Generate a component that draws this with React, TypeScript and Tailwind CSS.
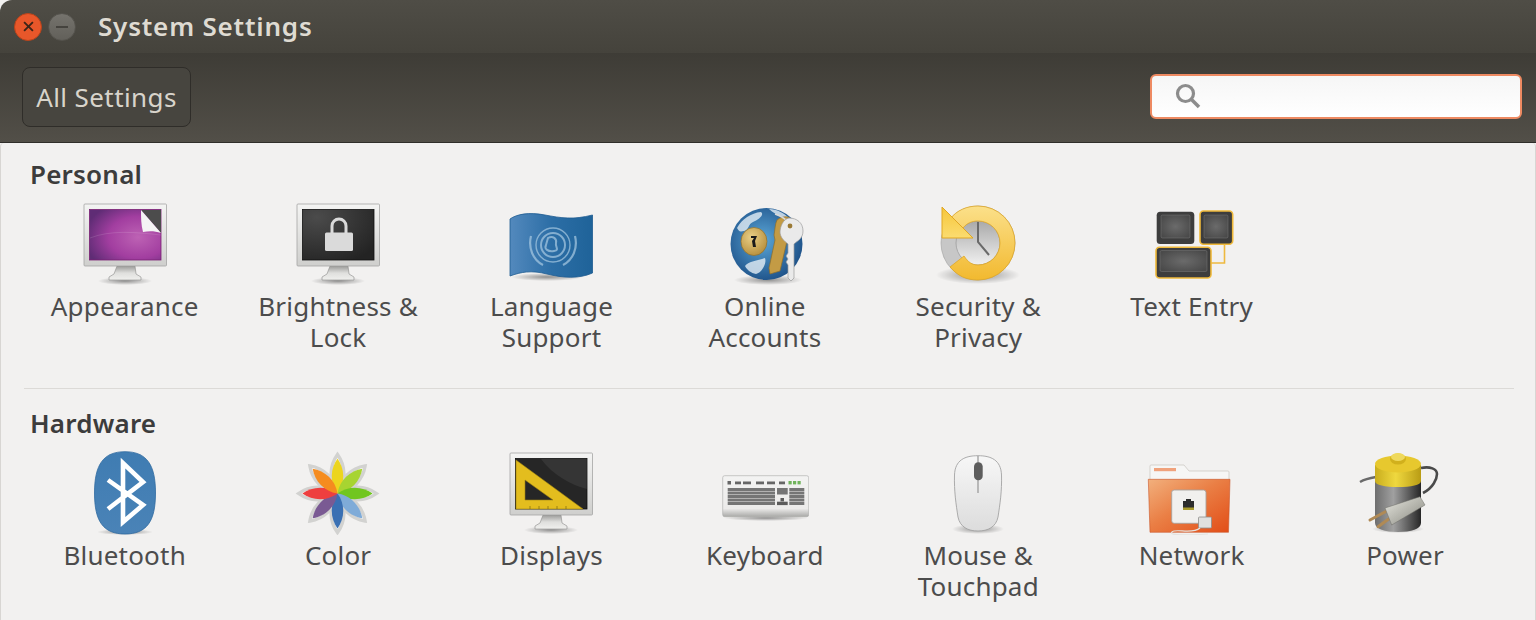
import React from 'react';

function Defs() {
    return (
        <svg width="0" height="0" className="block h-0 w-0">
            <defs>
                <linearGradient id="bezel" x1="0" y1="0" x2="0" y2="1">
                    <stop offset="0" stopColor="#f4f4f3" />
                    <stop offset="1" stopColor="#cfcfcd" />
                </linearGradient>
                <linearGradient id="neck" x1="0" y1="0" x2="0" y2="1">
                    <stop offset="0" stopColor="#9b9b99" />
                    <stop offset="0.5" stopColor="#dfdfdd" />
                    <stop offset="1" stopColor="#f0f0ee" />
                </linearGradient>
                <radialGradient id="purple" cx="0.68" cy="0.55" r="0.75">
                    <stop offset="0" stopColor="#bd62b4" />
                    <stop offset="0.55" stopColor="#a23ea0" />
                    <stop offset="1" stopColor="#5f2c75" />
                </radialGradient>
                <radialGradient id="darkscreen" cx="0.2" cy="0.15" r="1">
                    <stop offset="0" stopColor="#4b4b4b" />
                    <stop offset="1" stopColor="#232323" />
                </radialGradient>
                <linearGradient id="flag" x1="0" y1="0" x2="1" y2="0">
                    <stop offset="0" stopColor="#5389bd" />
                    <stop offset="0.5" stopColor="#2c6ea6" />
                    <stop offset="1" stopColor="#1f6399" />
                </linearGradient>
                <radialGradient id="globe" cx="0.45" cy="0.45" r="0.6">
                    <stop offset="0" stopColor="#5ba7d8" />
                    <stop offset="1" stopColor="#1c4f86" />
                </radialGradient>
                <radialGradient id="coin" cx="0.4" cy="0.35" r="0.7">
                    <stop offset="0" stopColor="#e9cf86" />
                    <stop offset="1" stopColor="#b58e3c" />
                </radialGradient>
                <linearGradient id="gold" x1="0" y1="0" x2="0" y2="1">
                    <stop offset="0" stopColor="#fbe08a" />
                    <stop offset="1" stopColor="#f2b92f" />
                </linearGradient>
                <linearGradient id="arrow" x1="0" y1="0" x2="0" y2="1">
                    <stop offset="0" stopColor="#f6c63a" />
                    <stop offset="1" stopColor="#fbdc70" />
                </linearGradient>
                <linearGradient id="clock" x1="0" y1="0" x2="0" y2="1">
                    <stop offset="0" stopColor="#a9a9a9" />
                    <stop offset="1" stopColor="#f0f0f0" />
                </linearGradient>
                <radialGradient id="keycap" cx="0.5" cy="0.5" r="0.6">
                    <stop offset="0" stopColor="#6b6b6b" />
                    <stop offset="1" stopColor="#4a4a4a" />
                </radialGradient>
                <linearGradient id="bt" x1="0" y1="0" x2="0" y2="1">
                    <stop offset="0" stopColor="#3f7cb2" />
                    <stop offset="1" stopColor="#4a83b7" />
                </linearGradient>
                <linearGradient id="kb" x1="0" y1="0" x2="0" y2="1">
                    <stop offset="0" stopColor="#f3f3f2" />
                    <stop offset="0.8" stopColor="#ecebea" />
                    <stop offset="1" stopColor="#a9a9a7" />
                </linearGradient>
                <linearGradient id="mouse" x1="0" y1="0" x2="0" y2="1">
                    <stop offset="0" stopColor="#f7f7f7" />
                    <stop offset="1" stopColor="#dcdcdc" />
                </linearGradient>
                <linearGradient id="folder" x1="0" y1="0" x2="1" y2="1">
                    <stop offset="0" stopColor="#f2b07d" />
                    <stop offset="0.45" stopColor="#ea7f45" />
                    <stop offset="1" stopColor="#e24d17" />
                </linearGradient>
                <linearGradient id="battery" x1="0" y1="0" x2="1" y2="0">
                    <stop offset="0" stopColor="#6e6e6e" />
                    <stop offset="0.4" stopColor="#a0a0a0" />
                    <stop offset="1" stopColor="#262626" />
                </linearGradient>
                <linearGradient id="batterytop" x1="0" y1="0" x2="1" y2="0">
                    <stop offset="0" stopColor="#c9ad1d" />
                    <stop offset="0.45" stopColor="#efd83f" />
                    <stop offset="1" stopColor="#b99c14" />
                </linearGradient>
                <linearGradient id="plug" x1="0" y1="0" x2="1" y2="1">
                    <stop offset="0" stopColor="#e8e8e0" />
                    <stop offset="1" stopColor="#85857d" />
                </linearGradient>
                <radialGradient id="shade" cx="0.5" cy="0.5" r="0.5">
                    <stop offset="0" stopColor="#000" stopOpacity="0.4" />
                    <stop offset="1" stopColor="#000" stopOpacity="0" />
                </radialGradient>
            </defs>
        </svg>
    );
}

function IconBox({ children }: { children: React.ReactNode }) {
    return (
        <svg viewBox="0 0 100 86" className="h-[86px] w-[100px] shrink-0 blur-[0.6px]">
            {children}
        </svg>
    );
}

// the monitor shared by Appearance, Brightness and Displays
function Monitor({ children }: { children: React.ReactNode }) {
    return (
        <>
            <ellipse cx="50" cy="81" rx="27" ry="4" fill="url(#shade)" />
            <path d="M42 66h18l1 8 5 3v3H34v-3l5-3z" fill="url(#neck)" stroke="#8c8c8a" strokeWidth="0.6" />
            <rect x="9" y="4" width="82.5" height="62" rx="1" fill="url(#bezel)" stroke="#a5a5a3" strokeWidth="0.8" />
            {children}
        </>
    );
}

function Appearance() {
    return (
        <IconBox>
            <Monitor>
                <rect x="14.5" y="9.5" width="71.5" height="50.5" fill="url(#purple)" stroke="#7a1f74" strokeWidth="0.8" />
                <path d="M66 10h20v23z" fill="#4c4c4c" />
                <path d="M66 10l20 23c-6-2-12-2-18-1-2-7-2-15-2-22z" fill="#f4f4f4" />
                <path d="M15 38c20-8 45-6 71-3" stroke="#fff" strokeOpacity="0.12" strokeWidth="1" fill="none" />
            </Monitor>
        </IconBox>
    );
}

function Brightness() {
    return (
        <IconBox>
            <Monitor>
                <rect x="14.5" y="9.5" width="71.5" height="50.5" fill="url(#darkscreen)" stroke="#111" strokeWidth="0.8" />
                <path d="M44 33v-7a7 7 0 0 1 14 0v7" fill="none" stroke="#dadada" strokeWidth="3" />
                <rect x="37" y="32.5" width="28" height="18.5" rx="1.5" fill="#dadada" />
            </Monitor>
        </IconBox>
    );
}

function Language() {
    return (
        <IconBox>
            <ellipse cx="46" cy="77" rx="36" ry="4" fill="url(#shade)" />
            <path
                d="M9 19C16 14 28 12 44 15S72 20 91.5 15V73C78 79 62 78 46 74S20 72 9 76Z"
                fill="url(#flag)"
                stroke="#1d5a90"
                strokeWidth="0.8"
            />
            <g fill="none" stroke="#a9cbe3" strokeOpacity="0.7">
                <circle cx="52" cy="45" r="12" strokeWidth="2" />
                <circle cx="52" cy="45" r="17" strokeWidth="1.4" />
                <path d="M30 36c-3 12 2 24 12 29M74 36c3 12-2 24-12 29" strokeWidth="2.2" />
                <path d="M47 38c5-3 9 1 8 5s4 7-2 8-10-2-8-6z" strokeWidth="2" />
            </g>
        </IconBox>
    );
}

function OnlineAccounts() {
    return (
        <IconBox>
            <ellipse cx="53" cy="80" rx="34" ry="5" fill="url(#shade)" />
            <circle cx="51.5" cy="44" r="36" fill="url(#globe)" />
            <path d="M22 28c5-9 14-15 24-16 4 3-3 8-8 10s-4 8-9 9-5 0-7-3zM30 66c4-5 12-5 20-8 2 5-3 15-9 16-5-1-9-4-11-8zM54 9c8 0 15 4 20 9-6 0-12-2-20-9z" fill="#e3eef5" fillOpacity="0.8" />
            <ellipse cx="39" cy="41.5" rx="13" ry="14" fill="url(#coin)" stroke="#8f6f2a" strokeWidth="0.7" />
            <path d="M36 36h6l-2 5 1 6h-3l-1-6 2-3h-3z" fill="#1a1a1a" />
            <path d="M62 20c6-5 15-4 15 2s-7 9-9 13l4 6-7 30-10 3-1-6 6-28-1-5c1-5 1-11 3-15z" fill="#c39b45" stroke="#8f6f2a" strokeWidth="0.7" />
            <path d="M60 14c6 2 10 4 14 9" fill="none" stroke="#d9d9d9" strokeWidth="1.4" />
            <path d="M74 18c8 0 14 5 14 13s-6 10-9 13v34l-3 3-3-3V65l-2-3 2-3-2-3 2-3v-9c-4-3-8-7-8-12s3-13 9-14z" fill="#eaeaea" stroke="#9b9b9b" strokeWidth="0.7" />
            <circle cx="75" cy="26" r="2.4" fill="#9a7a35" />
        </IconBox>
    );
}

function SecurityPrivacy() {
    return (
        <IconBox>
            <ellipse cx="50" cy="75" rx="42" ry="9" fill="url(#shade)" />
            <circle cx="50" cy="43" r="37" fill="#c7c7c7" stroke="#9f9f9f" strokeWidth="0.6" />
            <circle cx="50" cy="43" r="22" fill="url(#clock)" stroke="#8f8f8f" strokeWidth="0.6" />
            <path d="M50 22v20l11 13" fill="none" stroke="#6a6a6a" strokeWidth="2" />
            <path
                d="M22 19C29 10 39 6 50 6a37 37 0 0 1 0 74c-12 0-20-4-28-13l14-11c4 6 8 9 14 9a22 22 0 0 0 0-44c-6 0-11 2-15 7z"
                fill="url(#gold)"
                stroke="#e0a725"
                strokeWidth="0.8"
            />
            <path d="M14 7v31h31z" fill="url(#arrow)" stroke="#e0a725" strokeWidth="1" />
        </IconBox>
    );
}

function TextEntry() {
    return (
        <IconBox>
            <path d="M82.5 44v19H69" fill="none" stroke="#eeb93f" strokeWidth="1.6" />
            <rect x="14.7" y="11.7" width="37.6" height="32.3" rx="3.5" fill="#3d3d3d" />
            <rect x="19" y="15" width="29" height="23" rx="1.5" fill="url(#keycap)" stroke="#7a7a7a" strokeWidth="0.5" />
            <rect x="58" y="11" width="32.7" height="33.3" rx="3.5" fill="#3d3d3d" stroke="#efb93a" strokeWidth="1.6" />
            <rect x="62" y="15" width="24" height="23" rx="1.5" fill="url(#keycap)" stroke="#7a7a7a" strokeWidth="0.5" />
            <rect x="14" y="47.3" width="55" height="30.7" rx="3.5" fill="#3d3d3d" stroke="#efb93a" strokeWidth="1.6" />
            <rect x="18" y="50.5" width="47" height="21" rx="1.5" fill="url(#keycap)" stroke="#7a7a7a" strokeWidth="0.5" />
        </IconBox>
    );
}

function Bluetooth() {
    return (
        <IconBox>
            <ellipse cx="50" cy="83" rx="28" ry="3" fill="url(#shade)" />
            <path
                d="M19.5 44C19.5 16 28 2.7 50 2.7S80.5 16 80.5 44 72 85 50 85 19.5 72 19.5 44Z"
                fill="url(#bt)"
                stroke="#2f6aa0"
                strokeWidth="0.8"
            />
            <path d="M33 31 68 56 48 73V14L68 33 33 60" fill="none" stroke="#fff" strokeWidth="4.6" strokeLinejoin="miter" />
        </IconBox>
    );
}

const petals: { angle: number; color: string }[] = [
    { angle: 0, color: '#ecd51f' },
    { angle: 45, color: '#a7d431' },
    { angle: 90, color: '#71c61f' },
    { angle: 135, color: '#7fabd8' },
    { angle: 180, color: '#3a70b3' },
    { angle: 225, color: '#7a5a93' },
    { angle: 270, color: '#ee3f3f' },
    { angle: 315, color: '#f58c1f' },
];

function ColorIcon() {
    const petal = 'M0 0C-9-12-8-28 0-39 8-28 9-12 0 0Z';
    return (
        <IconBox>
            <g transform="translate(49.5 44.5)">
                {petals.map((p) => (
                    <path key={p.angle} d={petal} transform={`rotate(${p.angle})`} fill="#fff" stroke="#d2d2d0" strokeWidth="3.4" />
                ))}
                {petals.map((p) => (
                    <path key={p.angle} d={petal} transform={`rotate(${p.angle}) scale(0.9)`} fill={p.color} />
                ))}
            </g>
        </IconBox>
    );
}

function Displays() {
    const ticks = [29, 38, 47, 56, 65];
    return (
        <IconBox>
            <Monitor>
                <rect x="14.5" y="9.5" width="71.5" height="50.5" fill="#262626" stroke="#111" strokeWidth="0.8" />
                <path d="M40 10h46v30C70 36 52 26 40 10Z" fill="#fff" fillOpacity="0.07" />
                <path d="M15 11V60H82ZM24 31V51H52Z" fillRule="evenodd" fill="#e3bd1e" stroke="#9a7f10" strokeWidth="0.6" />
                {ticks.map((x) => (
                    <path key={x} d={`M${x} 60v-3`} stroke="#7d670c" strokeWidth="0.7" />
                ))}
            </Monitor>
        </IconBox>
    );
}

function Keyboard() {
    const fkeys = [[20, 6], [28, 8], [41, 8], [52, 8], [64, 6]];
    const leds = [73.5, 78, 82.5];
    const rows = [39, 42.5, 46, 49.5, 53];
    return (
        <IconBox>
            <ellipse cx="51" cy="69" rx="42" ry="3" fill="url(#shade)" />
            <rect x="7.7" y="26.7" width="86" height="41" rx="2" fill="url(#kb)" stroke="#a9a9a7" strokeWidth="0.6" />
            <rect x="12.5" y="32" width="3.5" height="3.5" fill="#666" />
            {fkeys.map(([x, w]) => (
                <rect key={x} x={x} y="32.5" width={w} height="2.8" fill="#666" />
            ))}
            {leds.map((x) => (
                <rect key={x} x={x} y="32" width="3.2" height="3.4" fill="#6fb35a" />
            ))}
            {rows.map((y) => (
                <React.Fragment key={y}>
                    <rect x="12.7" y={y} width="47.3" height="3" fill="#757575" />
                    <rect x="74.3" y={y} width="15" height="3" fill="#757575" />
                </React.Fragment>
            ))}
            <rect x="62" y="39" width="10.7" height="6.5" fill="#757575" />
            <rect x="65.5" y="49" width="3.5" height="3.4" fill="#5b5b5b" />
            <rect x="62" y="52.7" width="10.7" height="3.4" fill="#5b5b5b" />
        </IconBox>
    );
}

function Mouse() {
    return (
        <IconBox>
            <ellipse cx="50" cy="80" rx="26" ry="5" fill="url(#shade)" />
            <path
                d="M50 6.7C63 6.7 73 11 73.5 26 74 42 72 55 70 68 68 78 60 82 50 82S32 78 30 68C28 55 26 42 26.5 26 27 11 37 6.7 50 6.7Z"
                fill="url(#mouse)"
                stroke="#a3a3a3"
                strokeWidth="0.9"
            />
            <path d="M50 7v37" stroke="#8d8d8d" strokeWidth="1.1" />
            <rect x="46" y="13.3" width="8.7" height="18" rx="4.3" fill="#5d5d5d" />
        </IconBox>
    );
}

function Network() {
    return (
        <IconBox>
            <path d="M8 31V17a1 1 0 0 1 1-1h33l5 6h39a1 1 0 0 1 1 1v8z" fill="#f6f6f5" stroke="#c9c4bf" strokeWidth="0.7" />
            <rect x="12" y="19" width="22" height="3.2" fill="#f0a27c" />
            <path d="M6.3 30.3H88L86.5 83.3H8Z" fill="url(#folder)" stroke="#c9562a" strokeWidth="0.6" />
            <rect x="29.7" y="41" width="34.3" height="33.3" rx="2.5" fill="#f1f0ee" stroke="#a8a29c" strokeWidth="0.9" />
            <path d="M41 52h3v-2h5v2h3v9H41z" fill="#2c2c2c" />
            <rect x="41" y="58.5" width="11" height="2.5" fill="#a89a2c" />
            <rect x="56.5" y="68" width="13" height="11" rx="1" fill="#e0e0de" stroke="#8e8e8c" strokeWidth="0.8" />
            <path d="M58 79C50 86 34 79 30 83S48 86 66 85" fill="none" stroke="#e5e3e0" strokeWidth="1.2" />
        </IconBox>
    );
}

function Power() {
    return (
        <IconBox>
            <ellipse cx="43" cy="80" rx="26" ry="4" fill="url(#shade)" />
            <path d="M66 19c9-2 16 1 16 6s-4 14-14 19" fill="none" stroke="#4a4a4a" strokeWidth="2.6" />
            <path d="M5 33c5-3 10-4 16-5" fill="none" stroke="#6a6a6a" strokeWidth="2.4" />
            <path d="M20 16V74c0 6 10 9 23 9s23-3 23-9V16z" fill="url(#battery)" />
            <path d="M20 16V32c0 4 10 6 23 6s23-2 23-6V16z" fill="url(#batterytop)" />
            <ellipse cx="43" cy="15" rx="23" ry="8.5" fill="#e7c82e" />
            <ellipse cx="43" cy="10" rx="8" ry="5.5" fill="#d1b01c" />
            <ellipse cx="43" cy="8" rx="7" ry="4" fill="#efd95c" />
            <path d="M31.7 62 15 71M36.7 67.7 23 77.7" stroke="#b08a55" strokeWidth="3" strokeLinecap="round" />
            <path d="M30 59 65 47.7 70 56 36.7 76Z" fill="url(#plug)" stroke="#6d6d66" strokeWidth="0.5" />
        </IconBox>
    );
}

interface SettingItem {
    label: string;
    icon: React.ReactNode;
}

const personal: SettingItem[] = [
    { label: 'Appearance', icon: <Appearance /> },
    { label: 'Brightness &\nLock', icon: <Brightness /> },
    { label: 'Language\nSupport', icon: <Language /> },
    { label: 'Online\nAccounts', icon: <OnlineAccounts /> },
    { label: 'Security &\nPrivacy', icon: <SecurityPrivacy /> },
    { label: 'Text Entry', icon: <TextEntry /> },
];

const hardware: SettingItem[] = [
    { label: 'Bluetooth', icon: <Bluetooth /> },
    { label: 'Color', icon: <ColorIcon /> },
    { label: 'Displays', icon: <Displays /> },
    { label: 'Keyboard', icon: <Keyboard /> },
    { label: 'Mouse &\nTouchpad', icon: <Mouse /> },
    { label: 'Network', icon: <Network /> },
    { label: 'Power', icon: <Power /> },
];

function Section({ title, items }: { title: string; items: SettingItem[] }) {
    return (
        <section className="pl-[17px]">
            <h2 className="ml-[12px] h-[30px] text-[26px] leading-[28px] font-semibold tracking-[0.2px] text-[#3c3c3c]">{title}</h2>
            <div className="mt-[10px] grid grid-cols-[repeat(7,213.4px)]">
                {items.map((item) => (
                    <div key={item.label} className="flex flex-col items-center">
                        {item.icon}
                        <span className="mt-[5px] min-h-[62px] text-center text-[26px] leading-[31px] tracking-[0.2px] whitespace-pre-line text-[#4c4c4c]">
                            {item.label}
                        </span>
                    </div>
                ))}
            </div>
        </section>
    );
}

export default function App() {
    return (
        <div className="h-[620px] w-[1536px] overflow-hidden bg-[#f2f1f0] font-['Noto_Sans',sans-serif]">
            <header className="flex h-[53px] items-center rounded-tl-[12px] bg-gradient-to-b from-[#4f4d46] to-[#45433c] pl-[14px]">
                <span className="flex h-[28px] w-[28px] items-center justify-center rounded-full border border-[#b8431b] bg-[#e8572a]">
                    <svg viewBox="0 0 10 10" className="h-[11px] w-[11px]">
                        <path d="M1 1l8 8M9 1l-8 8" stroke="#3c2418" strokeWidth="1.7" />
                    </svg>
                </span>
                <span className="ml-[6px] flex h-[28px] w-[28px] items-center justify-center rounded-full border border-[#55534d] bg-gradient-to-b from-[#75736d] to-[#62605a]">
                    <span className="h-[2px] w-[12px] bg-[#45433e]" />
                </span>
                <span className="ml-[22px] text-[26px] font-semibold tracking-[0.8px] text-[#dfdbd2]">System Settings</span>
            </header>
            <div className="flex h-[90px] items-center justify-between border-b border-[#2f2e2a] bg-gradient-to-b from-[#3e3c36] to-[#524f48] pr-[14px] pb-[1px] pl-[22px]">
                <button className="h-[60px] w-[169px] rounded-[8px] border border-[#2f2d29] bg-[#47453f] text-[26px] tracking-[0.4px] text-[#d8d4cb]">
                    All Settings
                </button>
                <div className="-mt-[2px] flex h-[45px] w-[372px] items-center rounded-[6px] border-2 border-[#ee8a62] bg-gradient-to-b from-[#f6f6f6] to-white pl-[23px]">
                    <svg viewBox="0 0 26 26" className="h-[26px] w-[26px]">
                        <circle cx="10.5" cy="10.5" r="8" fill="none" stroke="#8c8c8c" strokeWidth="3.2" />
                        <path d="M16.5 16.5 24 24" stroke="#8c8c8c" strokeWidth="3.6" />
                    </svg>
                </div>
            </div>
            <main className="h-[477px] rounded-t-[4px] border-x border-[#d8d6d3] pt-[17px]">
                <Section title="Personal" items={personal} />
                <div className="mt-[35px] mb-[20px] ml-[23px] h-px w-[1490px] bg-[#dcdad7]" />
                <Section title="Hardware" items={hardware} />
            </main>
            <Defs />
        </div>
    );
}
